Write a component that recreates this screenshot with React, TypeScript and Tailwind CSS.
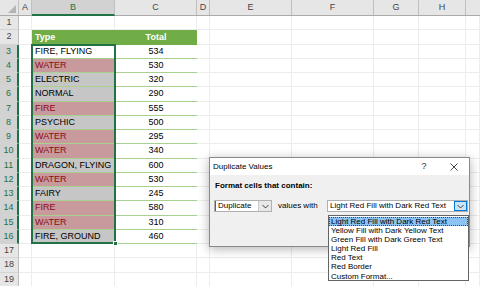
import React from 'react'

type Row = { n: number; type?: string; total?: string; dup?: boolean }

const data: Row[] = [
  { n: 3, type: 'FIRE, FLYING', total: '534' },
  { n: 4, type: 'WATER', total: '530', dup: true },
  { n: 5, type: 'ELECTRIC', total: '320' },
  { n: 6, type: 'NORMAL', total: '290' },
  { n: 7, type: 'FIRE', total: '555', dup: true },
  { n: 8, type: 'PSYCHIC', total: '500' },
  { n: 9, type: 'WATER', total: '295', dup: true },
  { n: 10, type: 'WATER', total: '340', dup: true },
  { n: 11, type: 'DRAGON, FLYING', total: '600' },
  { n: 12, type: 'WATER', total: '530', dup: true },
  { n: 13, type: 'FAIRY', total: '245' },
  { n: 14, type: 'FIRE', total: '580', dup: true },
  { n: 15, type: 'WATER', total: '310', dup: true },
  { n: 16, type: 'FIRE, GROUND', total: '460' },
]

const options = [
  'Light Red Fill with Dark Red Text',
  'Yellow Fill with Dark Yellow Text',
  'Green Fill with Dark Green Text',
  'Light Red Fill',
  'Red Text',
  'Red Border',
  'Custom Format...',
]

function Chevron() {
  return (
    <svg width="7" height="5" viewBox="0 0 7 5">
      <polyline points="0.5,1 3.5,4 6.5,1" fill="none" stroke="#444" strokeWidth="1" />
    </svg>
  )
}

function Blank({ w }: { w: string }) {
  return <div className={`${w} h-full shrink-0 border-r border-b border-[#ececec]`} />
}

function Tail() {
  return (
    <>
      <Blank w="w-[13px]" />
      <Blank w="w-[82px]" />
      <Blank w="w-[82px]" />
      <Blank w="w-[45px]" />
      <Blank w="w-[47px]" />
      <Blank w="flex-1" />
    </>
  )
}

function GridRow({ n, children }: { n: number; children?: React.ReactNode }) {
  const sel = n >= 3 && n <= 16
  return (
    <div className="flex h-[14.25px] shrink-0 leading-none">
      <div
        className={`w-[19px] shrink-0 flex items-center justify-center text-[9px] ${
          sel
            ? 'bg-[#d2d2d2] text-[#217346] border-r-2 border-[#217346]'
            : 'bg-[#e6e6e6] text-[#444] border-r border-[#bdbdbd]'
        } border-b border-b-[#d4d4d4]`}
      >
        {n}
      </div>
      {children}
    </div>
  )
}

export default function App() {
  return (
    <div className="relative w-[480px] h-[286px] overflow-hidden bg-white font-['Liberation_Sans',Arial,sans-serif] text-black select-none">
      {/* column headers */}
      <div className="flex h-[16px] bg-[#e6e6e6] border-b border-[#ababab] text-[9px] text-[#444] leading-none">
        <div className="relative w-[19px] shrink-0 border-r border-[#c0c0c0]">
          <div className="absolute right-[2px] bottom-[2px] w-0 h-0 border-l-[8px] border-l-transparent border-b-[8px] border-b-[#b4b4b4]" />
        </div>
        <div className="w-[13px] shrink-0 flex items-center justify-center border-r border-[#c0c0c0]">A</div>
        <div className="w-[83px] shrink-0 flex items-center justify-center bg-[#d2d2d2] text-[#217346] border-r border-[#c0c0c0] border-b-2 border-b-[#217346] -mb-px">B</div>
        <div className="w-[82px] shrink-0 flex items-center justify-center border-r border-[#c0c0c0]">C</div>
        <div className="w-[13px] shrink-0 flex items-center justify-center border-r border-[#c0c0c0]">D</div>
        <div className="w-[82px] shrink-0 flex items-center justify-center border-r border-[#c0c0c0]">E</div>
        <div className="w-[82px] shrink-0 flex items-center justify-center border-r border-[#c0c0c0]">F</div>
        <div className="w-[45px] shrink-0 flex items-center justify-center border-r border-[#c0c0c0]">G</div>
        <div className="w-[47px] shrink-0 flex items-center justify-center border-r border-[#c0c0c0]">H</div>
        <div className="flex-1" />
      </div>

      {/* row 1 */}
      <GridRow n={1}>
        <Blank w="w-[13px]" />
        <Blank w="w-[83px]" />
        <Blank w="w-[82px]" />
        <Tail />
      </GridRow>

      {/* row 2: table header */}
      <GridRow n={2}>
        <Blank w="w-[13px]" />
        <div className="w-[83px] shrink-0 bg-[#70ad47] text-white font-bold text-[9px] flex items-center pl-[3px]">Type</div>
        <div className="w-[82px] shrink-0 bg-[#70ad47] text-white font-bold text-[9px] flex items-center justify-center">Total</div>
        <Tail />
      </GridRow>

      {data.map((r) => (
        <GridRow key={r.n} n={r.n}>
          <Blank w="w-[13px]" />
          <div
            className={`w-[83px] shrink-0 flex items-center pl-[3px] text-[9px] border-b border-[#a9d08e] ${
              r.n === 3 ? 'bg-white' : r.dup ? 'bg-[#c89a9e] text-[#8a0a14]' : 'bg-[#c6c6c6]'
            }`}
          >
            {r.type}
          </div>
          <div className="w-[82px] shrink-0 flex items-center justify-center text-[9px] border-b border-[#a9d08e]">{r.total}</div>
          <Tail />
        </GridRow>
      ))}

      {[17, 18, 19].map((n) => (
        <GridRow key={n} n={n}>
          <Blank w="w-[13px]" />
          <Blank w="w-[83px]" />
          <Blank w="w-[82px]" />
          <Tail />
        </GridRow>
      ))}

      {/* selection outline B3:B16 */}
      <div className="absolute left-[31px] top-[43.5px] w-[85px] h-[200px] border-2 border-[#217346] pointer-events-none" />
      <div className="absolute left-[113px] top-[241px] w-[5px] h-[5px] bg-[#217346] border border-white" />

      {/* dialog */}
      <div className="absolute left-[209px] top-[157px] w-[261px] h-[90px] bg-[#f0f0f0] border border-[#8a8a8a] shadow-[0_2px_10px_rgba(0,0,0,0.3)] text-[8px] leading-none">
        <div className="flex items-center h-[17px] bg-white">
          <div className="pl-[3px] flex-1">Duplicate Values</div>
          <div className="w-[30px] flex justify-center text-[9px] text-[#333]">?</div>
          <div className="w-[30px] flex justify-center">
            <svg width="8" height="8" viewBox="0 0 8 8">
              <path d="M0.5 0.5 L7.5 7.5 M7.5 0.5 L0.5 7.5" stroke="#333" strokeWidth="0.9" />
            </svg>
          </div>
        </div>
        <div className="pl-[5px] pt-[7px] font-bold">Format cells that contain:</div>
        <div className="flex items-center mt-[10px] pl-[4px]">
          <div className="flex w-[58px] h-[12px] bg-white border border-[#b0b0b0]">
            <div className="flex-1 flex items-center pl-[2px] border-l border-[#0078d7]">Duplicate</div>
            <div className="w-[13px] flex items-center justify-center bg-[#e8e8e8] border-l border-[#c8c8c8]">
              <Chevron />
            </div>
          </div>
          <div className="ml-[6px] w-[49px]">values with</div>
          <div className="flex w-[141px] h-[12px] bg-white border border-[#b0b0b0]">
            <div className="flex-1 flex items-center pl-[2px]">Light Red Fill with Dark Red Text</div>
            <div className="w-[13px] flex items-center justify-center bg-[#cce4f7] border border-[#0078d7]">
              <Chevron />
            </div>
          </div>
        </div>

        {/* open list */}
        <div className="absolute left-[118px] top-[57px] w-[141px] h-[66px] bg-white border border-[#646464] pt-px text-[8px] z-10">
          {options.map((o, i) => (
            <div
              key={o}
              className={`h-[9.1px] leading-[9.1px] pl-[2px] ${i === 0 ? 'bg-[#8cc3f2] outline outline-1 outline-dotted outline-[#1e4f86] -outline-offset-1' : ''}`}
            >
              {o}
            </div>
          ))}
        </div>
      </div>
    </div>
  )
}
